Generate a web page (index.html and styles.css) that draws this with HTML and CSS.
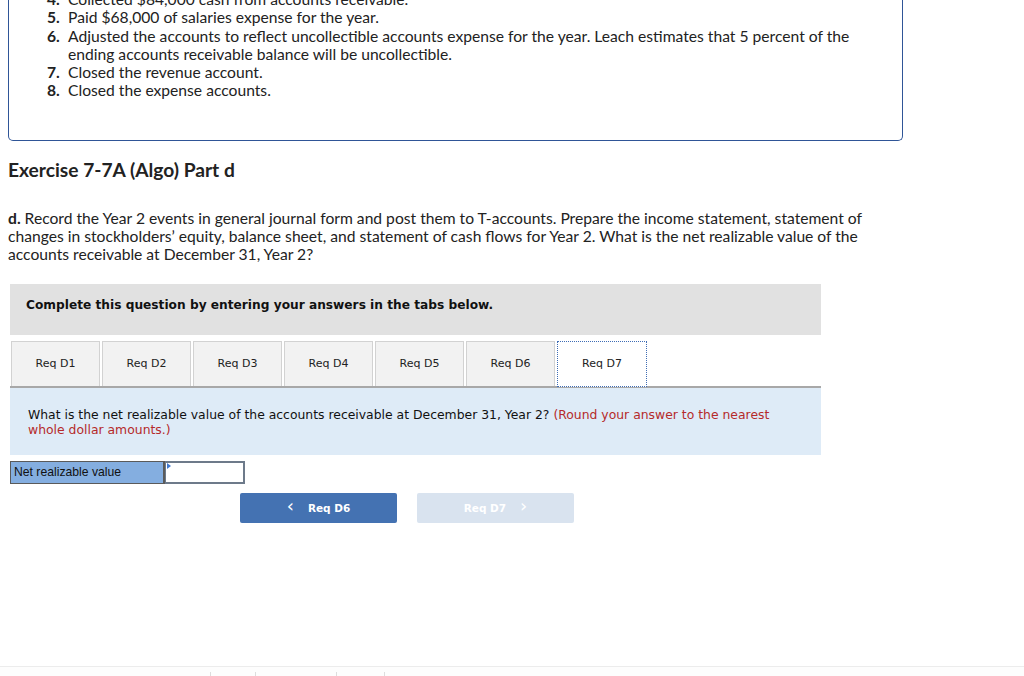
FILE: index.html
```html
<!DOCTYPE html>
<html>
<head>
<meta charset="utf-8">
<link rel="stylesheet" href="styles.css">
</head>
<body>
<div class="page">
  <div class="events">
    <ol class="list">
      <li><span class="num">4.</span><span>Collected $84,000 cash from accounts receivable.</span></li>
      <li><span class="num">5.</span><span>Paid $68,000 of salaries expense for the year.</span></li>
      <li><span class="num">6.</span><span>Adjusted the accounts to reflect uncollectible accounts expense for the year. Leach estimates that 5 percent of the ending accounts receivable balance will be uncollectible.</span></li>
      <li><span class="num">7.</span><span>Closed the revenue account.</span></li>
      <li><span class="num">8.</span><span>Closed the expense accounts.</span></li>
    </ol>
  </div>

  <h2 class="title">Exercise 7-7A (Algo) Part d</h2>

  <p class="prompt"><b>d.</b> Record the Year 2 events in general journal form and post them to T-accounts. Prepare the income statement, statement of changes in stockholders’ equity, balance sheet, and statement of cash flows for Year 2. What is the net realizable value of the accounts receivable at December 31, Year 2?</p>

  <div class="question">
    <div class="instructions">Complete this question by entering your answers in the tabs below.</div>
    <div class="tabs">
      <div class="tab">Req D1</div>
      <div class="tab">Req D2</div>
      <div class="tab">Req D3</div>
      <div class="tab">Req D4</div>
      <div class="tab">Req D5</div>
      <div class="tab">Req D6</div>
      <div class="tab active">Req D7</div>
    </div>
    <div class="panel">What is the net realizable value of the accounts receivable at December 31, Year 2? <span class="hint">(Round your answer to the nearest whole dollar amounts.)</span></div>
    <div class="answer">
      <div class="label">Net realizable value</div>
      <div class="input"><span class="flag"></span></div>
    </div>
    <div class="nav">
      <div class="btn prev"><span class="chev">&lsaquo;</span>Req D6</div>
      <div class="btn next">Req D7<span class="chev">&rsaquo;</span></div>
    </div>
  </div>
</div>
<div class="footer">
  <div class="ticks"><span></span><span></span><span></span><span></span></div>
</div>
</body>
</html>
```

FILE: styles.css
```css
html, body {
  margin: 0;
  padding: 0;
  background: #fff;
}
body {
  font-family: "Lato", "Open Sans", sans-serif;
  color: #222;
  height: 676px;
  overflow: hidden;
  position: relative;
}
.page {
  padding-left: 8px;
}
.events {
  width: 893px;
  margin-top: -30px;
  border: 1.5px solid #2f5597;
  border-top: none;
  border-radius: 0 0 5px 5px;
  padding: 20px 0 40px 0;
}
.list {
  list-style: none;
  margin: 0;
  padding: 0 40px 0 38px;
  font-size: 15.65px;
  line-height: 18.3px;
}
.list li {
  display: flex;
}
.num {
  flex: 0 0 21px;
  font-weight: 700;
}
.title {
  margin: 19px 0 0 0;
  font-size: 19.2px;
  font-weight: 700;
  line-height: 20px;
}
.prompt {
  margin: 29px 0 0 0;
  width: 870px;
  font-size: 15.65px;
  line-height: 18.3px;
}
.question {
  margin: 20px 0 0 2px;
  width: 811px;
  font-family: "DejaVu Sans", Verdana, sans-serif;
}
.instructions {
  background: #e1e1e1;
  height: 51px;
  box-sizing: border-box;
  padding: 14px 0 0 16px;
  font-size: 12.2px;
  font-weight: 700;
  color: #111;
}
.tabs {
  display: flex;
  gap: 2px;
  margin-top: 6px;
  border-bottom: 2px solid #a8a8a8;
  padding-left: 1px;
}
.tab {
  width: 89px;
  height: 45px;
  box-sizing: border-box;
  background: #f2f2f2;
  border: 1px solid #d2d2d2;
  border-bottom: none;
  font-size: 11px;
  color: #222;
  display: flex;
  align-items: center;
  justify-content: center;
}
.tab.active {
  background: #fff;
  border: 1px dotted #3f6db5;
  height: 46px;
  margin-bottom: -1px;
  width: 90px;
}
.panel {
  background: #deebf7;
  height: 67px;
  box-sizing: border-box;
  padding: 19px 40px 0 18px;
  font-size: 12.4px;
  line-height: 15px;
  color: #111;
}
.hint {
  color: #b52a2a;
}
.answer {
  display: flex;
  margin-top: 6px;
  height: 23px;
}
.label {
  width: 155px;
  box-sizing: border-box;
  background: #84aee0;
  border: 1px solid #5a5a5a;
  border-right: 2px solid #5a5a5a;
  font-family: "Liberation Sans", Arial, sans-serif;
  font-size: 12.2px;
  line-height: 21px;
  padding-left: 3px;
  color: #111;
}
.input {
  width: 80px;
  box-sizing: border-box;
  border: 2px solid #6d7a8a;
  border-left: 1px solid #6d7a8a;
  background: #fff;
  position: relative;
}
.flag {
  position: absolute;
  left: 1px;
  top: 0;
  width: 0;
  height: 0;
  border-top: 3px solid transparent;
  border-bottom: 3px solid transparent;
  border-left: 4px solid #3f78d0;
}
.nav {
  display: flex;
  gap: 20px;
  margin: 9px 0 0 230px;
}
.btn {
  width: 157px;
  height: 30px;
  border-radius: 2px;
  display: flex;
  align-items: center;
  justify-content: center;
  font-size: 10.5px;
  font-weight: 700;
  color: #fff;
}
.btn.prev {
  background: #4472b2;
}
.btn.next {
  background: #d9e3ef;
}
.chev {
  font-size: 18px;
  font-weight: 400;
  line-height: 1;
  margin-top: -3px;
}
.prev .chev {
  margin-right: 14px;
}
.next .chev {
  margin-left: 14px;
}
.footer {
  position: absolute;
  left: 0;
  right: 0;
  top: 666px;
  height: 10px;
  border-top: 1px solid #ececec;
  background: #fdfdfd;
}
.ticks span {
  position: absolute;
  top: 5px;
  width: 1px;
  height: 5px;
  background: #ddd;
}
.ticks span:nth-child(1) { left: 210px; }
.ticks span:nth-child(2) { left: 255px; }
.ticks span:nth-child(3) { left: 336px; }
.ticks span:nth-child(4) { left: 384px; }
```
